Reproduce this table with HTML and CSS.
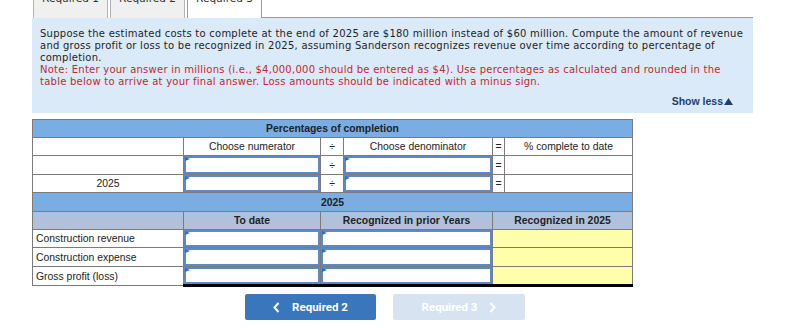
FILE: index.html
```html
<!DOCTYPE html>
<html lang="en">
<head>
<meta charset="utf-8">
<title>Required 3</title>
<link rel="stylesheet" href="styles.css">
</head>
<body>
<div class="page">
  <div class="tabs">
    <div class="tab">Required 1</div>
    <div class="tab">Required 2</div>
    <div class="tab active">Required 3</div>
    <div class="tab-rest"></div>
  </div>

  <div class="panel">
    <p class="question">Suppose the estimated costs to complete at the end of 2025 are $180 million instead of $60 million. Compute the amount of revenue and gross profit or loss to be recognized in 2025, assuming Sanderson recognizes revenue over time according to percentage of completion.</p>
    <p class="note">Note: Enter your answer in millions (i.e., $4,000,000 should be entered as $4). Use percentages as calculated and rounded in the table below to arrive at your final answer. Loss amounts should be indicated with a minus sign.</p>
    <div class="toggle"><span>Show less</span><svg class="tri" width="9" height="7" viewBox="0 0 9 7"><polygon points="4.5,0 9,7 0,7" fill="#1d3e6e"/></svg></div>
  </div>

  <table class="grid">
    <colgroup>
      <col class="c-label">
      <col class="c-num">
      <col class="c-op">
      <col class="c-den">
      <col class="c-eq">
      <col class="c-pct">
    </colgroup>
    <tr class="r18">
      <th colspan="6" class="head">Percentages of completion</th>
    </tr>
    <tr class="r18">
      <td></td>
      <td class="center">Choose numerator</td>
      <td class="center">&divide;</td>
      <td class="center">Choose denominator</td>
      <td class="center">=</td>
      <td class="center">% complete to date</td>
    </tr>
    <tr class="r19">
      <td></td>
      <td class="in"><div class="box"><i class="flag"></i></div></td>
      <td class="center">&divide;</td>
      <td class="in"><div class="box"><i class="flag"></i></div></td>
      <td class="center">=</td>
      <td></td>
    </tr>
    <tr class="r18">
      <td class="center">2025</td>
      <td class="in"><div class="box"><i class="flag"></i></div></td>
      <td class="center">&divide;</td>
      <td class="in"><div class="box"><i class="flag"></i></div></td>
      <td class="center">=</td>
      <td></td>
    </tr>
    <tr class="r19">
      <th colspan="6" class="head">2025</th>
    </tr>
    <tr class="r18">
      <th class="sub"></th>
      <th class="sub">To date</th>
      <th colspan="2" class="sub">Recognized in prior Years</th>
      <th colspan="2" class="sub">Recognized in 2025</th>
    </tr>
    <tr class="r18">
      <td class="label">Construction revenue</td>
      <td class="in"><div class="box"><i class="flag"></i></div></td>
      <td colspan="2" class="in"><div class="box"><i class="flag"></i></div></td>
      <td colspan="2" class="calc"></td>
    </tr>
    <tr class="r19">
      <td class="label">Construction expense</td>
      <td class="in"><div class="box"><i class="flag"></i></div></td>
      <td colspan="2" class="in"><div class="box"><i class="flag"></i></div></td>
      <td colspan="2" class="calc"></td>
    </tr>
    <tr class="r18 total">
      <td class="label">Gross profit (loss)</td>
      <td class="in"><div class="box"><i class="flag"></i></div></td>
      <td colspan="2" class="in"><div class="box"><i class="flag"></i></div></td>
      <td colspan="2" class="calc"></td>
    </tr>
  </table>

  <div class="nav">
    <div class="btn">
      <svg width="7" height="11" viewBox="0 0 7 11"><polyline points="5.5,1 1.5,5.5 5.5,10" fill="none" stroke="#fff" stroke-width="2"/></svg>
      <span>Required 2</span>
    </div>
    <div class="btn off">
      <span>Required 3</span>
      <svg width="7" height="11" viewBox="0 0 7 11"><polyline points="1.5,1 5.5,5.5 1.5,10" fill="none" stroke="#fff" stroke-width="2"/></svg>
    </div>
  </div>
</div>
</body>
</html>
```

FILE: styles.css
```css
html, body {
  margin: 0;
  background: #fff;
}

body {
  font-family: "DejaVu Sans", Verdana, sans-serif;
  color: #1e1e1e;
}

.page {
  width: 721px;
  padding-left: 32px;
}

/* tab strip: the tabs run off the top edge of the view */
.tabs {
  display: flex;
  align-items: flex-end;
  height: 18px;
}

.tab {
  box-sizing: border-box;
  width: 75px;
  height: 30px;
  margin-right: 2px;
  padding-top: 3px;
  background: #f0f0f0;
  border: 1px solid #b4b4b4;
  border-bottom: 0;
  font-size: 10.5px;
  line-height: 12px;
  text-align: center;
  color: #333;
}

.tab:first-child {
  margin-left: 1px;
}

.tab.active {
  background: #fff;
  border-color: #9a9a9a;
  margin-right: 0;
}

.tab-rest {
  flex: 1;
  border-bottom: 1px solid #9a9a9a;
}

/* question panel */
.panel {
  box-sizing: border-box;
  height: 95px;
  padding: 10px 8px 0 8px;
  background: #dbeaf8;
}

.panel p {
  margin: 0;
  font-size: 10px;
  line-height: 12px;
  letter-spacing: 0.25px;
}

.question {
  color: #1e1e1e;
}

.note {
  color: #c3282d;
}

.toggle {
  margin-top: 7px;
  margin-right: 12px;
  text-align: right;
  font-family: "Liberation Sans", Arial, sans-serif;
  font-weight: bold;
  font-size: 10.5px;
  line-height: 12px;
  color: #1d3e6e;
}

.toggle .tri {
  margin-left: 1px;
  vertical-align: 0;
}

/* worksheet table */
.grid {
  margin-top: 6px;
  width: 600px;
  border-collapse: collapse;
  table-layout: fixed;
  font-family: "Liberation Sans", Arial, sans-serif;
  font-size: 10.4px;
  color: #222;
}

.c-label { width: 151px; }
.c-num   { width: 137px; }
.c-op    { width: 23px; }
.c-den   { width: 149px; }
.c-eq    { width: 12px; }
.c-pct   { width: 128px; }

.grid td,
.grid th {
  border: 1px solid #7b7b7b;
  padding: 0;
  background: #fff;
}

.r18 td, .r18 th { height: 17px; }
.r19 td, .r19 th { height: 18px; }

.grid th {
  font-weight: bold;
  text-align: center;
  color: #222;
}

.grid th.head {
  background: #7aade3;
}

.grid th.sub {
  background: #b1c1dc;
}

.center {
  text-align: center;
}

.label {
  padding-left: 3px !important;
  text-align: left;
}

.calc {
  background: #ffffab !important;
}

/* answer entry cells */
.in {
  vertical-align: top;
}

.box {
  position: relative;
  box-sizing: border-box;
  height: 17px;
  border: 2px solid #5f89c4;
  background: #fff;
}

.r19 .box { height: 18px; }

.flag {
  position: absolute;
  left: -1px;
  top: -1px;
  width: 0;
  height: 0;
  border-left: 5px solid #2f6fbe;
  border-top: 2px solid transparent;
  border-bottom: 2px solid transparent;
}

.total .in,
.total .calc {
  border-top: 1px solid #000;
  border-bottom: 3px solid #000;
}

/* navigation buttons */
.nav {
  display: flex;
  gap: 17px;
  margin-top: 7px;
  padding-left: 213px;
}

.btn {
  display: flex;
  align-items: center;
  justify-content: center;
  gap: 12px;
  width: 131px;
  height: 26px;
  border-radius: 2px;
  background: #3a76bb;
  color: #fff;
  font-family: Roboto, "Liberation Sans", sans-serif;
  font-weight: bold;
  font-size: 11.5px;
}

.btn.off {
  width: 132px;
  background: #d8e3f1;
}
```
